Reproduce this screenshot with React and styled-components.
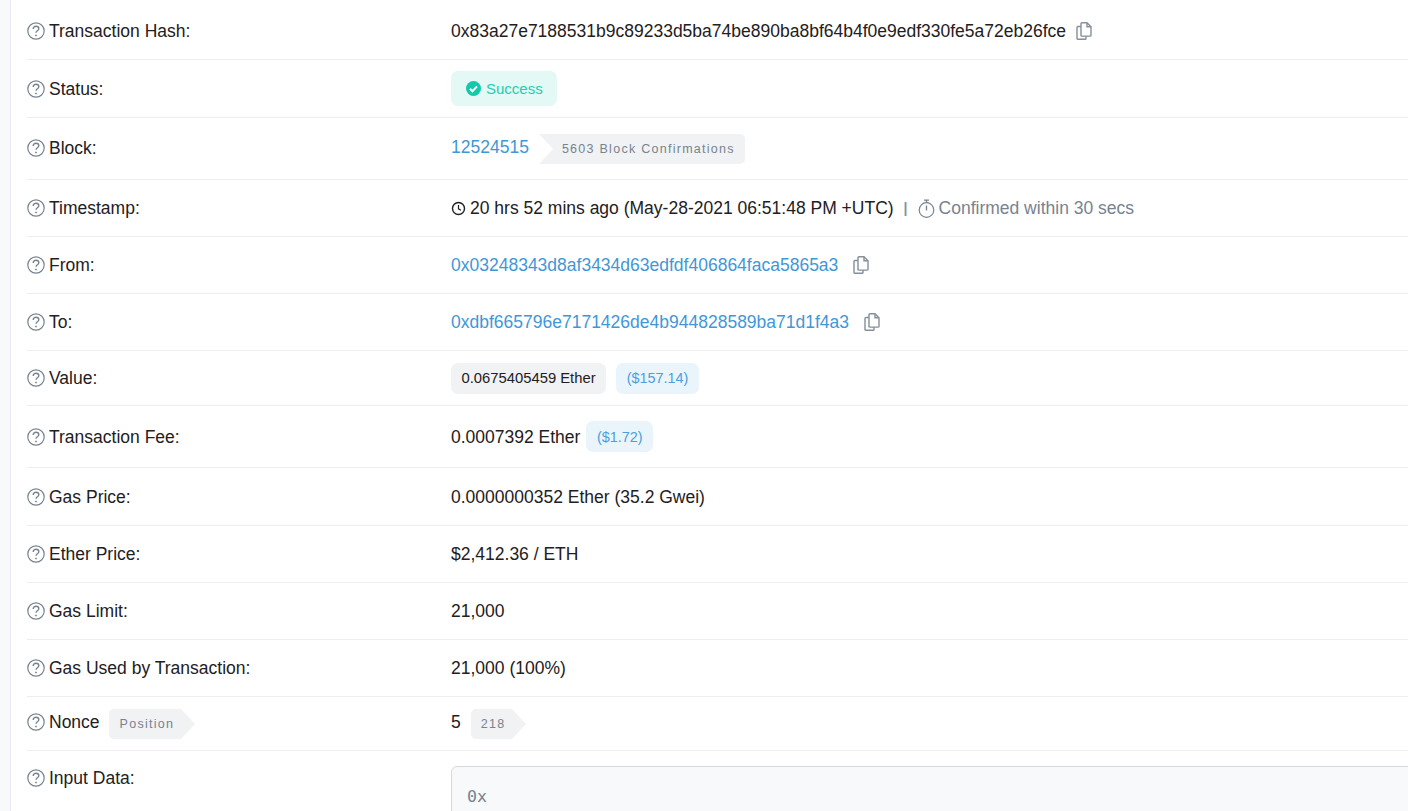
import React from 'react'
import styled, { createGlobalStyle } from 'styled-components'

const GlobalStyle = createGlobalStyle`
  html, body { margin: 0; padding: 0; background: #fff; height: 100%; overflow: hidden; }
  body { font-family: "Liberation Sans", Arial, sans-serif; font-size: 17.5px; color: #1e2022; }
`

const Page = styled.div`
  display: flex;
  height: 811px;
  overflow: hidden;
`

const Gutter = styled.div`
  flex: 0 0 10px;
  background: #f8f9fa;
  border-right: 1px solid #e7eaf3;
`

const Details = styled.div`
  flex: 1;
  min-width: 0;
  padding-left: 16px;
`

const Row = styled.div`
  display: grid;
  grid-template-columns: 424px 1fr;
  align-items: center;
  height: ${p => p.$h}px;
  padding: ${p => p.$top || 0}px 0 ${p => p.$bottom || 0}px;
  box-sizing: border-box;
  border-bottom: 1px solid #eceef4;
`

const Label = styled.div`
  display: flex;
  align-items: center;
  line-height: 20px;
`

const Help = styled.svg`
  width: 18px;
  height: 18px;
  margin-right: 4px;
  flex: none;
  fill: none;
  stroke: #77838f;
`

const Value = styled.div`
  display: flex;
  align-items: center;
  line-height: 20px;
  white-space: nowrap;
`

const Link = styled.a`
  color: #3f97d8;
  text-decoration: none;
`

const BlockLink = styled(Link)`
  margin-bottom: 3px;
`

const CopyIcon = styled.svg`
  width: 16px;
  height: 18px;
  margin-left: ${p => p.$gap}px;
  fill: none;
  stroke: #848f9a;
  stroke-width: 1.4;
`

const StatusBadge = styled.span`
  display: inline-flex;
  align-items: center;
  gap: 5px;
  height: 35px;
  padding: 0 14px 0 15px;
  border-radius: 7px;
  background: #e4f8f5;
  color: #1fceb0;
  font-size: 15px;
`

const ArrowTag = styled.span`
  position: relative;
  display: inline-flex;
  align-items: center;
  height: 30px;
  margin-left: ${p => p.$left}px;
  margin-top: ${p => p.$drop || 0}px;
  padding: ${p => p.$pad};
  background: #f1f2f4;
  color: #77838f;
  font-size: 12.5px;
  letter-spacing: 1.27px;
  border-radius: ${p => p.$radius};
  &::${p => p.$side} {
    content: '';
    position: absolute;
    top: 0;
    ${p => (p.$side === 'before' ? 'left: 0;' : 'left: 100%;')}
    border-style: solid;
    border-width: 15px 0 15px 14px;
    border-color: ${p => (p.$side === 'before' ? 'transparent transparent transparent #fff' : 'transparent transparent transparent #f1f2f4')};
  }
`

const Pill = styled.span`
  display: inline-flex;
  align-items: center;
  height: 31px;
  margin-left: ${p => p.$left || 0}px;
  padding: 0 10.5px;
  border-radius: 7px;
  font-size: ${p => (p.$blue ? 14.4 : 14.8)}px;
  background: ${p => (p.$blue ? '#eaf4fb' : '#f1f2f4')};
  color: ${p => (p.$blue ? '#4a9fdc' : '#1e2022')};
`

const Muted = styled.span`
  color: #77838f;
`

const Separator = styled.span`
  margin: 0 10px;
  color: #7f93a8;
  font-size: 14px;
  font-weight: 700;
`

const InputRow = styled.div`
  display: grid;
  grid-template-columns: 424px 1fr;
  align-items: start;
  padding-top: 15px;
`

const InputLabel = styled(Label)`
  margin-top: 2px;
`

const InputBox = styled.div`
  height: 120px;
  width: 1100px;
  box-sizing: border-box;
  padding: 20px 15px;
  background: #f8f9fa;
  border: 1px solid #d5dae2;
  border-radius: 6px;
  font-family: "DejaVu Sans Mono", monospace;
  font-size: 16.6px;
  line-height: 20px;
  color: #77838f;
`

const HelpIcon = () => (
  <Help viewBox="0 0 18 18">
    <circle cx="9" cy="9" r="8.2" strokeWidth="1.2" />
    <path d="M6.2 7c0-1.6 1.2-2.7 2.8-2.7s2.8 1 2.8 2.4c0 2.1-2.8 2-2.8 4.1" strokeWidth="1.4" />
    <circle cx="9" cy="13.5" r=".6" strokeWidth="1" />
  </Help>
)

const Copy = ({ gap }) => (
  <CopyIcon $gap={gap} viewBox="0 0 16 18">
    <path d="M5 14V1.8c0-.6.4-1 1-1h5l4 4v8.4c0 .5-.4.9-1 .9H5.9c-.5 0-.9-.3-.9-.9z" />
    <path d="M11 1v3.8h4" />
    <path d="M5 4.500H2c-.6 0-1 .4-1 1v11c0 .4.4.8 1 .8h7c.6 0 1-.4 1-.8v-2.400" />
  </CopyIcon>
)

const rows = [
  {
    h: 60,
    top: 2,
    label: 'Transaction Hash:',
    value: (
      <>
        0x83a27e7188531b9c89233d5ba74be890ba8bf64b4f0e9edf330fe5a72eb26fce
        <Copy gap={10} />
      </>
    ),
  },
  {
    h: 58,
    label: 'Status:',
    value: (
      <StatusBadge>
        <svg width="15" height="15" viewBox="0 0 15 15">
          <circle cx="7.5" cy="7.5" r="7.5" fill="#12c9a9" />
          <path d="M4 7.7l2.5 2.5L11 5.4" fill="none" stroke="#fff" strokeWidth="2" />
        </svg>
        Success
      </StatusBadge>
    ),
  },
  {
    h: 62,
    bottom: 1,
    label: 'Block:',
    value: (
      <>
        <BlockLink>12524515</BlockLink>
        <ArrowTag $side="before" $left={10} $drop={1} $pad="0 10px 0 23px" $radius="0 5px 5px 0">
          5603 Block Confirmations
        </ArrowTag>
      </>
    ),
  },
  {
    h: 57,
    label: 'Timestamp:',
    value: (
      <>
        <svg width="15" height="15" viewBox="0 0 15 15" style={{ marginRight: 4 }}>
          <circle cx="7.5" cy="7.5" r="6" fill="none" stroke="#1e2022" strokeWidth="1.4" />
          <path d="M7.5 4v3.8l2.4 1.5" fill="none" stroke="#1e2022" strokeWidth="1.2" />
        </svg>
        20 hrs 52 mins ago (May-28-2021 06:51:48 PM +UTC)
        <Separator>|</Separator>
        <svg width="17" height="19" viewBox="0 0 17 19" style={{ marginRight: 4 }}>
          <circle cx="8.5" cy="11" r="7.3" fill="none" stroke="#77838f" strokeWidth="1.2" />
          <path d="M6 1.2h5M8.5 1.2v2.5M8.5 6.5v5" fill="none" stroke="#77838f" strokeWidth="1.3" />
        </svg>
        <Muted>Confirmed within 30 secs</Muted>
      </>
    ),
  },
  {
    h: 57,
    label: 'From:',
    value: (
      <>
        <Link>0x03248343d8af3434d63edfdf406864faca5865a3</Link>
        <Copy gap={15} />
      </>
    ),
  },
  {
    h: 57,
    label: 'To:',
    value: (
      <>
        <Link>0xdbf665796e7171426de4b944828589ba71d1f4a3</Link>
        <Copy gap={15} />
      </>
    ),
  },
  {
    h: 55,
    label: 'Value:',
    value: (
      <>
        <Pill>0.0675405459 Ether</Pill>
        <Pill $blue $left={10}>($157.14)</Pill>
      </>
    ),
  },
  {
    h: 62,
    label: 'Transaction Fee:',
    value: (
      <>
        0.0007392 Ether
        <Pill $blue $left={6}>($1.72)</Pill>
      </>
    ),
  },
  { h: 58, label: 'Gas Price:', value: '0.0000000352 Ether (35.2 Gwei)' },
  { h: 57, label: 'Ether Price:', value: '$2,412.36 / ETH' },
  { h: 57, label: 'Gas Limit:', value: '21,000' },
  { h: 57, label: 'Gas Used by Transaction:', value: '21,000 (100%)' },
  {
    h: 54,
    bottom: 3,
    label: (
      <>
        Nonce
        <ArrowTag $side="after" $left={9} $drop={4} $pad="0 7px 0 11px" $radius="5px 0 0 5px">
          Position
        </ArrowTag>
      </>
    ),
    value: (
      <>
        5
        <ArrowTag $side="after" $left={10} $drop={4} $pad="0 7px 0 10px" $radius="5px 0 0 5px">
          218
        </ArrowTag>
      </>
    ),
  },
]

export default function App() {
  return (
    <Page>
      <GlobalStyle />
      <Gutter />
      <Details>
        {rows.map((row, i) => (
          <Row key={i} $h={row.h} $top={row.top} $bottom={row.bottom}>
            <Label>
              <HelpIcon />
              {row.label}
            </Label>
            <Value>{row.value}</Value>
          </Row>
        ))}
        <InputRow>
          <InputLabel>
            <HelpIcon />
            Input Data:
          </InputLabel>
          <InputBox>0x</InputBox>
        </InputRow>
      </Details>
    </Page>
  )
}
